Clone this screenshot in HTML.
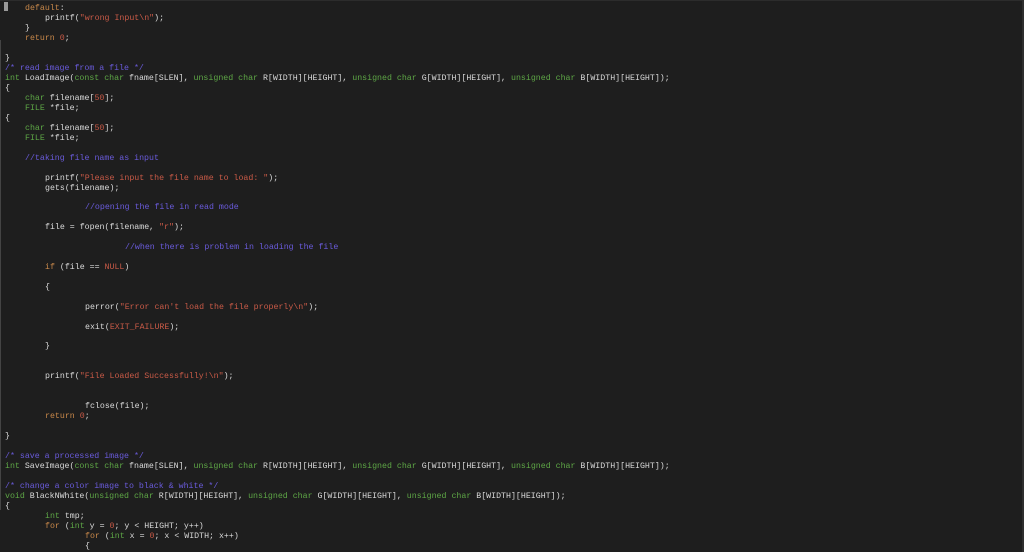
<!DOCTYPE html>
<html><head><meta charset="utf-8"><style>
html,body{margin:0;padding:0;background:#1e1e1e;width:1024px;height:552px;overflow:hidden}
body{position:relative;font-family:"Liberation Mono",monospace;font-size:8.27px;color:#dadada}
#w{position:absolute;left:0;top:2px;width:1024px;height:552px}
.l{position:absolute;white-space:pre;line-height:10px;height:10px}
.k{color:#c8884a}.t{color:#5ea746}.c{color:#6a5bdc}.s{color:#c95a47}
#bar{position:absolute;left:4px;top:2px;width:4px;height:9px;background:#9a9a9a}
#edge{position:absolute;left:0;top:40px;width:1px;height:470px;background:#444}
#redge{position:absolute;right:0;top:0;width:2px;height:552px;background:#2e2e2e}
#tedge{position:absolute;left:0;top:0;width:1024px;height:1px;background:#2c2c2c}
</style></head><body>
<div id="tedge"></div><div id="bar"></div><div id="edge"></div><div id="redge"></div>
<div id="w">
<div class="l" style="left:25px;top:2px"><span class="k">default</span>:</div>
<div class="l" style="left:45px;top:12px">printf(<span class="s">"wrong Input\n"</span>);</div>
<div class="l" style="left:25px;top:22px">}</div>
<div class="l" style="left:25px;top:32px"><span class="k">return</span> <span class="s">0</span>;</div>
<div class="l" style="left:5px;top:52px">}</div>
<div class="l c" style="left:5px;top:62px">/* read image from a file */</div>
<div class="l" style="left:5px;top:72px"><span class="t">int</span> LoadImage(<span class="t">const char</span> fname[SLEN], <span class="t">unsigned char</span> R[WIDTH][HEIGHT], <span class="t">unsigned char</span> G[WIDTH][HEIGHT], <span class="t">unsigned char</span> B[WIDTH][HEIGHT]);</div>
<div class="l" style="left:5px;top:82px">{</div>
<div class="l" style="left:25px;top:92px"><span class="t">char</span> filename[<span class="s">50</span>];</div>
<div class="l" style="left:25px;top:102px"><span class="t">FILE</span> *file;</div>
<div class="l" style="left:5px;top:112px">{</div>
<div class="l" style="left:25px;top:122px"><span class="t">char</span> filename[<span class="s">50</span>];</div>
<div class="l" style="left:25px;top:132px"><span class="t">FILE</span> *file;</div>
<div class="l c" style="left:25px;top:152px">//taking file name as input</div>
<div class="l" style="left:45px;top:172px">printf(<span class="s">"Please input the file name to load: "</span>);</div>
<div class="l" style="left:45px;top:182px">gets(filename);</div>
<div class="l c" style="left:85px;top:201px">//opening the file in read mode</div>
<div class="l" style="left:45px;top:221px">file = fopen(filename, <span class="s">"r"</span>);</div>
<div class="l c" style="left:125px;top:241px">//when there is problem in loading the file</div>
<div class="l" style="left:45px;top:261px"><span class="k">if</span> (file == <span class="s">NULL</span>)</div>
<div class="l" style="left:45px;top:281px">{</div>
<div class="l" style="left:85px;top:301px">perror(<span class="s">"Error can't load the file properly\n"</span>);</div>
<div class="l" style="left:85px;top:321px">exit(<span class="s">EXIT_FAILURE</span>);</div>
<div class="l" style="left:45px;top:340px">}</div>
<div class="l" style="left:45px;top:370px">printf(<span class="s">"File Loaded Successfully!\n"</span>);</div>
<div class="l" style="left:85px;top:400px">fclose(file);</div>
<div class="l" style="left:45px;top:410px"><span class="k">return</span> <span class="s">0</span>;</div>
<div class="l" style="left:5px;top:430px">}</div>
<div class="l c" style="left:5px;top:450px">/* save a processed image */</div>
<div class="l" style="left:5px;top:460px"><span class="t">int</span> SaveImage(<span class="t">const char</span> fname[SLEN], <span class="t">unsigned char</span> R[WIDTH][HEIGHT], <span class="t">unsigned char</span> G[WIDTH][HEIGHT], <span class="t">unsigned char</span> B[WIDTH][HEIGHT]);</div>
<div class="l c" style="left:5px;top:480px">/* change a color image to black &amp; white */</div>
<div class="l" style="left:5px;top:490px"><span class="t">void</span> BlackNWhite(<span class="t">unsigned char</span> R[WIDTH][HEIGHT], <span class="t">unsigned char</span> G[WIDTH][HEIGHT], <span class="t">unsigned char</span> B[WIDTH][HEIGHT]);</div>
<div class="l" style="left:5px;top:500px">{</div>
<div class="l" style="left:45px;top:510px"><span class="t">int</span> tmp;</div>
<div class="l" style="left:45px;top:520px"><span class="k">for</span> (<span class="t">int</span> y = <span class="s">0</span>; y &lt; HEIGHT; y++)</div>
<div class="l" style="left:85px;top:530px"><span class="k">for</span> (<span class="t">int</span> x = <span class="s">0</span>; x &lt; WIDTH; x++)</div>
<div class="l" style="left:85px;top:540px">{</div>
</div>
</body></html>
